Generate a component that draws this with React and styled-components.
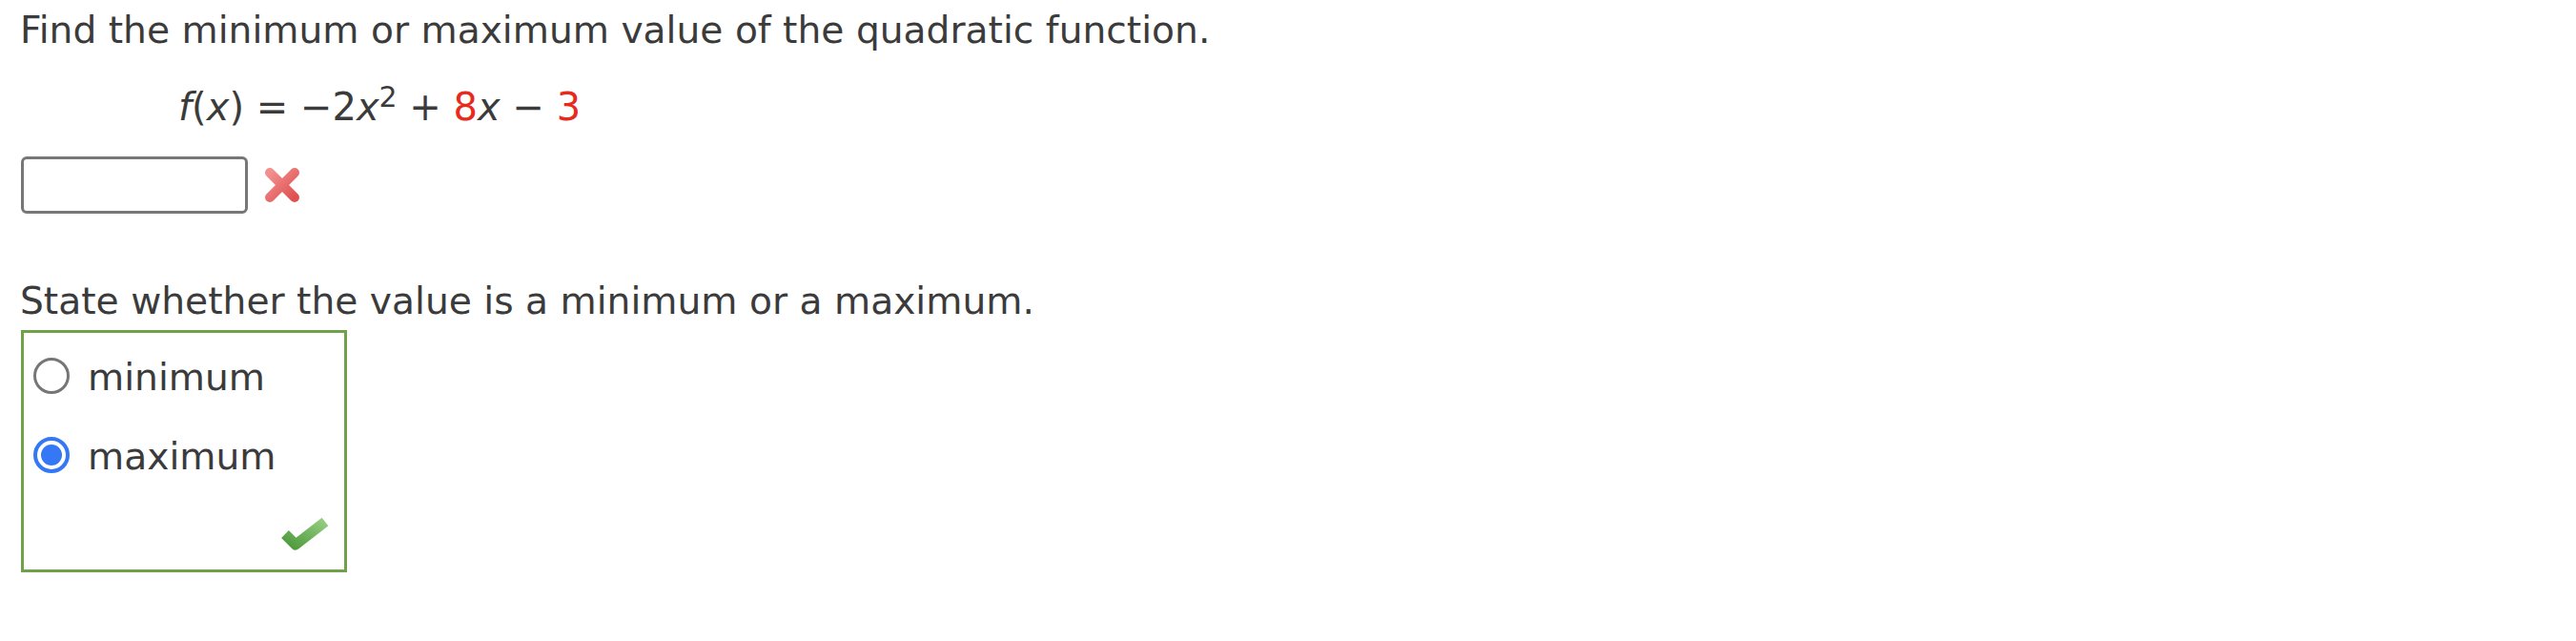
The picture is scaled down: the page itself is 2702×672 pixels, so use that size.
import React from "react";
import styled, { createGlobalStyle } from "styled-components";

const GlobalStyle = createGlobalStyle`
    body {
        margin: 0;
        background: #ffffff;
        color: #3b3b3b;
        font-family: "DejaVu Sans", Verdana, sans-serif;
    }
`

const Page = styled.main`
    padding: 8px 0 0 21px;
`

const Prompt = styled.p`
    margin: ${props => props.$top || 0}px 0 0 0;
    font-size: 39.2px;
    line-height: 48px;
`

const Equation = styled.div`
    margin: 32px 0 0 166px;
    font-size: 40px;
    line-height: 48px;
    white-space: pre;
`

const Var = styled.i`
    font-style: italic;
`

const Coef = styled.span`
    color: #e8291c;
`

const Sup = styled.sup`
    font-size: 30px;
    line-height: 0;
    vertical-align: 14px;
`

const AnswerRow = styled.div`
    display: flex;
    align-items: center;
    gap: 15px;
    margin: 28px 0 0 1px;
`

const AnswerInput = styled.input`
    width: 238px;
    height: 60px;
    box-sizing: border-box;
    border: 3px solid #777777;
    border-radius: 6px;
    background: #ffffff;
    outline: none;
    font-size: 36px;
    font-family: inherit;
`

const ChoiceBox = styled.div`
    margin: 6px 0 0 1px;
    width: 342px;
    height: 254px;
    box-sizing: border-box;
    border: 3px solid #6fa14a;
    display: flex;
    flex-direction: column;
    gap: 35px;
    padding: 21px 14px 19px 10px;
`

const Option = styled.label`
    display: flex;
    align-items: center;
    gap: 19px;
    height: 48px;
    font-size: 39.2px;
    line-height: 48px;
    padding-top: 4px;
    box-sizing: border-box;
`

const Radio = styled.span`
    width: 38px;
    height: 38px;
    box-sizing: border-box;
    border-radius: 50%;
    border: ${props => props.$checked ? "4px solid #3478f6" : "3px solid #767676"};
    background: #ffffff;
    display: flex;
    align-items: center;
    justify-content: center;
    flex-shrink: 0;
    margin-top: -4px;
    &::after {
        content: "";
        display: ${props => props.$checked ? "block" : "none"};
        width: 22px;
        height: 22px;
        border-radius: 50%;
        background: #3478f6;
    }
`

const CheckWrap = styled.div`
    margin-top: auto;
    align-self: flex-end;
    display: flex;
`

const Cross = () => (
    <svg width="42" height="42" viewBox="0 0 42 42">
        <defs>
            <linearGradient id="crossFill" x1="0" y1="0" x2="1" y2="1">
                <stop offset="0" stopColor="#f29090" />
                <stop offset="1" stopColor="#df5050" />
            </linearGradient>
        </defs>
        <g stroke="url(#crossFill)" strokeWidth="10" strokeLinecap="round">
            <line x1="8" y1="8" x2="34" y2="34" />
            <line x1="34" y1="8" x2="8" y2="34" />
        </g>
    </svg>
)

const Check = () => (
    <svg width="54" height="38" viewBox="0 0 54 38">
        <defs>
            <linearGradient id="checkFill" x1="1" y1="0" x2="0" y2="1">
                <stop offset="0" stopColor="#93cc7e" />
                <stop offset="1" stopColor="#4e9a3d" />
            </linearGradient>
        </defs>
        <polyline
            points="6,20 17,31 48,7"
            fill="none"
            stroke="url(#checkFill)"
            strokeWidth="11"
            strokeLinejoin="round"
        />
    </svg>
)

const choices = [
    { label: "minimum", checked: false },
    { label: "maximum", checked: true },
]

const App = () => {
    return (
        <Page>
            <GlobalStyle />
            <Prompt>Find the minimum or maximum value of the quadratic function.</Prompt>
            <Equation>
                <Var>f</Var>(<Var>x</Var>) = −2<Var>x</Var><Sup>2</Sup> + <Coef>8</Coef><Var>x</Var> − <Coef>3</Coef>
            </Equation>
            <AnswerRow>
                <AnswerInput type="text" aria-label="answer" />
                <Cross />
            </AnswerRow>
            <Prompt $top={68}>State whether the value is a minimum or a maximum.</Prompt>
            <ChoiceBox>
                {choices.map(choice => (
                    <Option key={choice.label}>
                        <Radio $checked={choice.checked} />
                        {choice.label}
                    </Option>
                ))}
                <CheckWrap>
                    <Check />
                </CheckWrap>
            </ChoiceBox>
        </Page>
    )
}

export default App
